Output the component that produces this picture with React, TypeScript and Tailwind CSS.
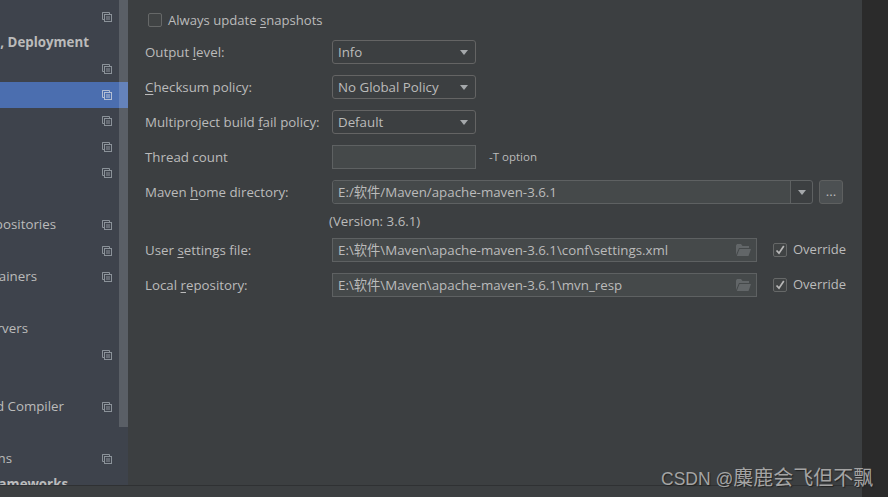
import React from 'react';

const font = 'font-["Open_Sans","Noto_Sans_CJK_SC",sans-serif]';

// Settings tree rows, clipped by the left edge as in the dialog
const treeRows = [
  { text: '', mr: 'mr-0', icon: true },
  { text: 'Build, Execution, Deployment', mr: 'mr-[39px]', icon: false, bold: true },
  { text: '', mr: 'mr-0', icon: true },
  { text: 'Maven', mr: 'mr-[200px]', icon: true, selected: true },
  { text: '', mr: 'mr-0', icon: true },
  { text: '', mr: 'mr-0', icon: true },
  { text: '', mr: 'mr-0', icon: true },
  { text: '', mr: 'mr-0', icon: false },
  { text: 'Remote Jar Repositories', mr: 'mr-[72px]', icon: true },
  { text: '', mr: 'mr-0', icon: true },
  { text: 'Docker Containers', mr: 'mr-[91px]', icon: true },
  { text: '', mr: 'mr-0', icon: false },
  { text: 'Application Servers', mr: 'mr-[100px]', icon: false },
  { text: '', mr: 'mr-0', icon: true },
  { text: '', mr: 'mr-0', icon: false },
  { text: 'Android Compiler and Compiler', mr: 'mr-[64px]', icon: true },
  { text: '', mr: 'mr-0', icon: false },
  { text: 'Required Plugins', mr: 'mr-[116px]', icon: true },
  { text: 'Languages & Frameworks', mr: 'mr-[60px]', icon: false, bold: true },
];

function ProjectIcon({ selected }: { selected?: boolean }) {
  return (
    <svg width="10" height="10" viewBox="0 0 10 10" fill="none" stroke={selected ? '#b4bfd4' : '#8b9299'} strokeWidth="1" className="absolute left-[102px] top-[8px]">
      <path d="M2.5 .5H.5V7.5H2" />
      <path d="M.5 .5H7.5V2" />
      <rect x="2.5" y="2.5" width="7" height="7" />
      <path d="M4 5H8M4 7H8" />
    </svg>
  );
}

function Underlined({ before, letter, after }: { before: string; letter: string; after: string }) {
  return (
    <>
      {before}
      <span className="underline underline-offset-2">{letter}</span>
      {after}
    </>
  );
}

function Arrow() {
  return <span className="h-0 w-0 border-x-[4.5px] border-t-[5px] border-x-transparent border-t-[#a5a8ab]" />;
}

function Combo({ value }: { value: string }) {
  return (
    <div className="flex h-[24px] w-[144px] items-center justify-between rounded-[3px] border border-[#646464] bg-[#3c3f41] pl-[5px] pr-[7px]">
      <span className="pt-[2px]">{value}</span>
      <Arrow />
    </div>
  );
}

function FolderIcon() {
  return (
    <svg width="15" height="12" viewBox="0 0 15 12" className="shrink-0">
      <path d="M0 1.5 1 0H5L6.5 2H13V4H3L0 11Z" fill="#626668" />
      <path d="M3.5 5H15L12.5 12H.8Z" fill="#626668" />
    </svg>
  );
}

function PathField({ value }: { value: string }) {
  return (
    <div className="flex h-[24px] w-[425px] items-center justify-between border border-[#5e6162] bg-[#45494a] pl-[5px] pr-[5px]">
      <span className="pt-[2px]">{value}</span>
      <FolderIcon />
    </div>
  );
}

function CheckBox({ checked }: { checked?: boolean }) {
  return (
    <span className="flex h-[14px] w-[14px] items-center justify-center rounded-[2px] border border-[#666868] bg-[#404344]">
      {checked && (
        <svg width="10" height="10" viewBox="0 0 10 10" fill="none" stroke="#b8b8b8" strokeWidth="1.7">
          <path d="M1.5 5.5 4 8.2 8.8 1" />
        </svg>
      )}
    </span>
  );
}

function Label({ children }: { children: React.ReactNode }) {
  return <div className="w-[187px] shrink-0 pt-[2px]">{children}</div>;
}

export default function App() {
  return (
    <div className={`relative flex h-[497px] w-[888px] overflow-hidden bg-[#3c3f41] text-[13.3px] text-[#bbbbbb] ${font}`}>
      <div className="flex w-[862px] flex-col">
        <div className="flex h-[486px] border-b border-[#2f3133]">
          {/* settings tree */}
          <div className="relative h-full w-[128px] shrink-0 overflow-hidden bg-[#3e434c] pt-[4px]">
            {treeRows.map((row, i) => (
              <div key={i} className={`relative flex h-[26px] items-center justify-end whitespace-nowrap ${row.selected ? 'bg-[#4b6eaf]' : ''}`}>
                {row.text && <span className={`${row.mr} ${row.bold ? 'font-bold' : ''}`}>{row.text}</span>}
                {row.icon && <ProjectIcon selected={row.selected} />}
              </div>
            ))}
            <div className="absolute right-0 top-0 h-[427px] w-[9px] bg-white/[.15]" />
          </div>

          {/* Maven form */}
          <div className="flex min-w-0 flex-1 flex-col pl-[17px] pt-[10px]">
            <div className="flex h-[20px] items-center gap-[6px] pl-[3px]">
              <CheckBox />
              <span className="pt-[2px] text-[13.1px]">
                <Underlined before="Always update " letter="s" after="napshots" />
              </span>
            </div>
            <div className="mt-[10px] flex items-center">
              <Label>
                <Underlined before="Output " letter="l" after="evel:" />
              </Label>
              <Combo value="Info" />
            </div>
            <div className="mt-[11px] flex items-center">
              <Label>
                <Underlined before="" letter="C" after="hecksum policy:" />
              </Label>
              <Combo value="No Global Policy" />
            </div>
            <div className="mt-[11px] flex items-center">
              <Label>
                <Underlined before="Multiproject build " letter="f" after="ail policy:" />
              </Label>
              <Combo value="Default" />
            </div>
            <div className="mt-[11px] flex items-center">
              <Label>Thread count</Label>
              <div className="h-[24px] w-[144px] border border-[#5e6162] bg-[#45494a]" />
              <span className="ml-[13px] text-[11.5px]">-T option</span>
            </div>
            <div className="mt-[11px] flex items-center">
              <Label>
                <Underlined before="Maven " letter="h" after="ome directory:" />
              </Label>
              <div className="flex h-[24px] w-[481px] items-center rounded-[3px] border border-[#5e6162]">
                <div className="flex h-full flex-1 items-center rounded-l-[3px] border-r border-[#5e6162] bg-[#45494a] pl-[5px] pt-[2px]">
                  E:/软件/Maven/apache-maven-3.6.1
                </div>
                <div className="flex h-full w-[21px] items-center justify-center">
                  <Arrow />
                </div>
              </div>
              <div className="ml-[6px] flex h-[24px] w-[24px] items-center justify-center rounded-[3px] border border-[#5e6060] bg-[#4c5052] leading-none">
                ...
              </div>
            </div>
            <div className="mt-[8px] flex h-[18px] items-center pl-[184px] pt-[2px]">(Version: 3.6.1)</div>
            <div className="mt-[8px] flex items-center">
              <Label>
                <Underlined before="User " letter="s" after="ettings file:" />
              </Label>
              <PathField value="E:\软件\Maven\apache-maven-3.6.1\conf\settings.xml" />
              <span className="ml-[16px] mr-[6px]">
                <CheckBox checked />
              </span>
              <span className="text-[13px]">Override</span>
            </div>
            <div className="mt-[11px] flex items-center">
              <Label>
                <Underlined before="Local " letter="r" after="epository:" />
              </Label>
              <PathField value="E:\软件\Maven\apache-maven-3.6.1\mvn_resp" />
              <span className="ml-[16px] mr-[6px]">
                <CheckBox checked />
              </span>
              <span className="text-[13px]">Override</span>
            </div>
          </div>
        </div>
      </div>
      <div className="flex-1 bg-[#2b2b2b]" />
      {/* watermark */}
      <div className='absolute left-[661px] top-[463px] whitespace-nowrap font-["Liberation_Sans","Noto_Sans_CJK_SC",sans-serif] text-[17.5px] text-[#a4a4a4] [text-shadow:1px_1px_1px_#222]'>
        CSDN @<span className="text-[20px]">麋鹿会飞但不飘</span>
      </div>
    </div>
  );
}
